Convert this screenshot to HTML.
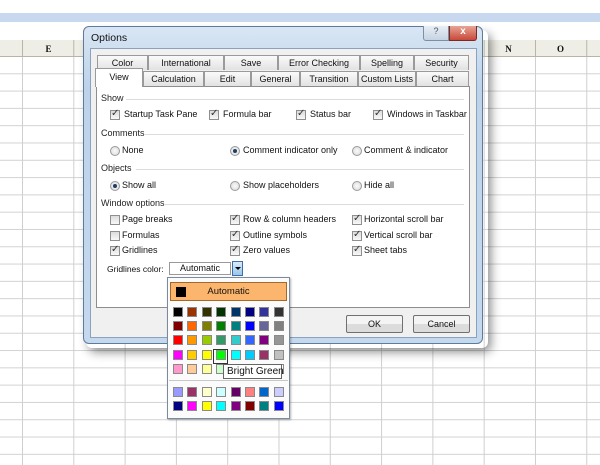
<!DOCTYPE html>
<html><head><meta charset="utf-8"><style>
*{margin:0;padding:0;box-sizing:border-box}
body{width:600px;height:465px;overflow:hidden;background:#fff;position:relative;font-family:"Liberation Sans",sans-serif;font-size:9px;color:#111}
.a{position:absolute}
.grid{left:0;top:40px;width:600px;height:425px;
background-image:linear-gradient(to right,#cfcfcf 1px,transparent 1px),linear-gradient(to bottom,#d2d2d2 1px,transparent 1px);
background-size:51.3px 17.3px;background-position:22px 16px}
.hdr{left:0;top:40px;width:600px;height:17px;background:#efeee6;border-bottom:1px solid #b8b5a5;
background-image:linear-gradient(to right,#b8b5a5 1px,transparent 1px);background-size:51.3px 17px;background-position:22px 0}
.hl{font-family:"Liberation Serif",serif;font-size:9px;font-weight:bold;text-align:center;width:51px;top:44px}
.cb{width:10px;height:10px;border:1px solid #8e8f8f;background:linear-gradient(#dcdcdc,#f8f8f8)}
.cb.c::after{content:"✓";position:absolute;left:0px;top:-3px;font-size:10px;color:#333}
.rb{width:10px;height:10px;border:1px solid #9a9a9a;border-radius:50%;background:radial-gradient(#fafafa,#d8d8d8)}
.rb.c::after{content:"";position:absolute;left:2px;top:2px;width:4px;height:4px;border-radius:50%;background:#1f3d66}
.lbl{white-space:nowrap}
.sec{white-space:nowrap;color:#222}
.line{height:1px;background:#dcdcdc}
.tab{height:15px;border:1px solid #9a9a9a;border-bottom:none;background:linear-gradient(#fafafa,#e2e2e2);text-align:center;line-height:14px;font-size:9px}
.sw{width:10px;height:10px;border:1px solid #8a8a8a}
.btn{height:18px;border:1px solid #707070;border-radius:2px;background:linear-gradient(#f4f4f4 50%,#dcdcdc 50%);text-align:center;line-height:16px}
</style></head><body>
<div class="a" style="left:0;top:13px;width:600px;height:9px;background:#c7d8ef"></div>
<div class="a grid"></div>
<div class="a hdr"></div>
<div class="a hl" style="left:23px">E</div>
<div class="a hl" style="left:483px">N</div>
<div class="a hl" style="left:535px">O</div>

<div class="a" style="left:86px;top:30px;width:402px;height:318px;box-shadow:3px 4px 10px rgba(0,0,0,.45);border-radius:6px"></div>
<div class="a" style="left:83px;top:26px;width:400px;height:318px;border:1px solid #5f7b9a;border-radius:6px;background:linear-gradient(#d9e6f4,#bcd3ea 60px,#c4d9ee)"></div>
<div class="a lbl" style="left:91px;top:32px;font-size:10.5px">Options</div>
<div class="a" style="left:423px;top:26px;width:26px;height:15px;border:1px solid #7d8fa5;border-top:none;border-radius:0 0 0 3px;background:linear-gradient(#e8eef6,#c7d3e2);text-align:center;font-size:9px;color:#456">?</div>
<div class="a" style="left:449px;top:26px;width:28px;height:15px;border:1px solid #7a2a20;border-top:none;border-radius:0 0 3px 0;background:linear-gradient(#e8a494,#c8483a);text-align:center;color:#fff;font-weight:bold;font-size:10px">x</div>
<div class="a" style="left:90px;top:48px;width:387px;height:290px;background:#f0f0f0;border:1px solid #8aa2bd"></div>
<div class="a tab" style="left:97px;top:55px;width:51px">Color</div>
<div class="a tab" style="left:148px;top:55px;width:76px">International</div>
<div class="a tab" style="left:224px;top:55px;width:54px">Save</div>
<div class="a tab" style="left:278px;top:55px;width:82px">Error Checking</div>
<div class="a tab" style="left:360px;top:55px;width:54px">Spelling</div>
<div class="a tab" style="left:414px;top:55px;width:55px">Security</div>
<div class="a" style="left:96px;top:86px;width:374px;height:222px;background:#fff;border:1px solid #8e8e8e"></div>
<div class="a tab" style="left:143px;top:71px;width:61px">Calculation</div>
<div class="a tab" style="left:204px;top:71px;width:47px">Edit</div>
<div class="a tab" style="left:251px;top:71px;width:49px">General</div>
<div class="a tab" style="left:300px;top:71px;width:58px">Transition</div>
<div class="a tab" style="left:358px;top:71px;width:58px">Custom Lists</div>
<div class="a tab" style="left:416px;top:71px;width:53px">Chart</div>
<div class="a tab" style="left:95px;top:68px;width:48px;height:19px;background:#fff;line-height:16px">View</div>

<div class="a sec" style="left:101px;top:93px">Show</div><div class="a line" style="left:126px;top:99px;width:338px"></div>
<div class="a cb c" style="left:110px;top:110px"></div><div class="a lbl" style="left:124px;top:109px">Startup Task Pane</div>
<div class="a cb c" style="left:209px;top:110px"></div><div class="a lbl" style="left:223px;top:109px">Formula bar</div>
<div class="a cb c" style="left:296px;top:110px"></div><div class="a lbl" style="left:310px;top:109px">Status bar</div>
<div class="a cb c" style="left:373px;top:110px"></div><div class="a lbl" style="left:387px;top:109px">Windows in Taskbar</div>

<div class="a sec" style="left:101px;top:128px">Comments</div><div class="a line" style="left:145px;top:134px;width:319px"></div>
<div class="a rb" style="left:110px;top:146px"></div><div class="a lbl" style="left:122px;top:145px">None</div>
<div class="a rb c" style="left:230px;top:146px"></div><div class="a lbl" style="left:243px;top:145px">Comment indicator only</div>
<div class="a rb" style="left:352px;top:146px"></div><div class="a lbl" style="left:364px;top:145px">Comment &amp; indicator</div>

<div class="a sec" style="left:101px;top:163px">Objects</div><div class="a line" style="left:136px;top:169px;width:328px"></div>
<div class="a rb c" style="left:110px;top:181px"></div><div class="a lbl" style="left:122px;top:180px">Show all</div>
<div class="a rb" style="left:230px;top:181px"></div><div class="a lbl" style="left:243px;top:180px">Show placeholders</div>
<div class="a rb" style="left:352px;top:181px"></div><div class="a lbl" style="left:364px;top:180px">Hide all</div>

<div class="a sec" style="left:101px;top:198px">Window options</div><div class="a line" style="left:165px;top:204px;width:299px"></div>
<div class="a cb" style="left:110px;top:215px"></div><div class="a lbl" style="left:122px;top:214px">Page breaks</div>
<div class="a cb c" style="left:230px;top:215px"></div><div class="a lbl" style="left:243px;top:214px">Row &amp; column headers</div>
<div class="a cb c" style="left:352px;top:215px"></div><div class="a lbl" style="left:364px;top:214px">Horizontal scroll bar</div>
<div class="a cb" style="left:110px;top:231px"></div><div class="a lbl" style="left:122px;top:230px">Formulas</div>
<div class="a cb c" style="left:230px;top:231px"></div><div class="a lbl" style="left:243px;top:230px">Outline symbols</div>
<div class="a cb c" style="left:352px;top:231px"></div><div class="a lbl" style="left:364px;top:230px">Vertical scroll bar</div>
<div class="a cb c" style="left:110px;top:246px"></div><div class="a lbl" style="left:122px;top:245px">Gridlines</div>
<div class="a cb c" style="left:230px;top:246px"></div><div class="a lbl" style="left:243px;top:245px">Zero values</div>
<div class="a cb c" style="left:352px;top:246px"></div><div class="a lbl" style="left:364px;top:245px">Sheet tabs</div>

<div class="a lbl" style="left:107px;top:264px;font-size:8.5px">Gridlines color:</div>
<div class="a" style="left:169px;top:262px;width:62px;height:13px;border:1px solid #999;background:#fff;text-align:center;line-height:11px;font-size:9px">Automatic</div>
<div class="a" style="left:232px;top:261px;width:11px;height:15px;border:1px solid #3c6ea8;background:linear-gradient(#d8ebfa,#9cc6ea)"></div>
<div class="a" style="left:235px;top:267px;width:0;height:0;border-left:3px solid transparent;border-right:3px solid transparent;border-top:3px solid #000"></div>

<div class="a btn" style="left:346px;top:315px;width:57px">OK</div>
<div class="a btn" style="left:413px;top:315px;width:57px">Cancel</div>

<div class="a" style="left:167px;top:277px;width:123px;height:142px;background:#fbfbfb;border:1px solid #7b8a9c;box-shadow:1px 1px 2px rgba(0,0,0,.3)"></div>
<div class="a" style="left:170px;top:282px;width:117px;height:19px;border:1px solid #a06a2a;background:#fcb56c;text-align:center;line-height:17px;font-size:9.5px">Automatic</div>
<div class="a" style="left:176px;top:287px;width:10px;height:10px;background:#000"></div>
<div class="a" style="left:169px;top:380px;width:119px;height:1px;background:#c8c8c8"></div>
<div id="sw"></div>
<div class="a" style="left:213px;top:349px;width:15px;height:15px;border:1px solid #333"></div>
<div class="a" style="left:223px;top:364px;width:59px;height:15px;border:1px solid #666;background:#fff;font-size:10px;line-height:13px;padding-left:3px;white-space:nowrap">Bright Green</div>
<script>
var rows=[[312,["#000","#993300","#333300","#003300","#003366","#000080","#333399","#333"]],
[326,["#800000","#ff6600","#808000","#008000","#008080","#0000ff","#666699","#808080"]],
[340,["#ff0000","#ff9900","#99cc00","#339966","#33cccc","#3366ff","#800080","#969696"]],
[355,["#ff00ff","#ffcc00","#ffff00","#00ff00","#00ffff","#00ccff","#993366","#c0c0c0"]],
[369,["#ff99cc","#ffcc99","#ffff99","#ccffcc","#ccffff","#99ccff","#cc99ff","#fff"]],
[392,["#9999ff","#993366","#ffffcc","#ccffff","#660066","#ff8080","#0066cc","#ccccff"]],
[406,["#000080","#ff00ff","#ffff00","#00ffff","#800080","#800000","#008080","#0000ff"]]];
var xs=[178,192,207,221,236,250,264,279],h="";
rows.forEach(function(r){r[1].forEach(function(c,i){h+='<div class="a sw" style="left:'+(xs[i]-5)+'px;top:'+(r[0]-5)+'px;background:'+c+'"></div>';});});
document.getElementById("sw").outerHTML=h;
</script>
</body></html>
